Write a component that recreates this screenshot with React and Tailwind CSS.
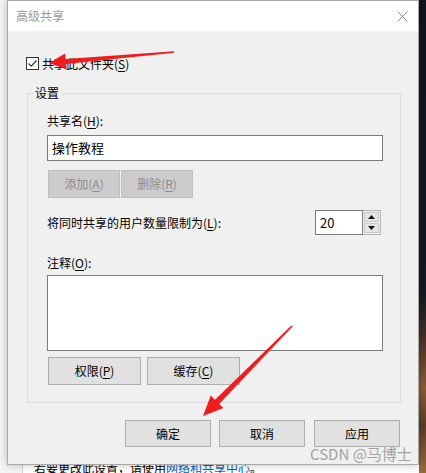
const ui = "font-['Noto_Sans_CJK_SC','Noto_Sans',sans-serif] text-[12px] text-black";

function Key({ children }) {
  return <u className="underline underline-offset-2 decoration-1">{children}</u>;
}

function Button({ children, className = '', disabled = false }) {
  return (
    <button
      disabled={disabled}
      className={
        'flex items-center justify-center border leading-none ' +
        (disabled
          ? 'bg-[#cccccc] border-[#bfbfbf] text-[#8d8d8d] '
          : 'bg-[#e1e1e1] border-[#adadad] text-black ') +
        className
      }
    >
      {children}
    </button>
  );
}

function Checkbox() {
  return (
    <span className="flex h-[13px] w-[13px] items-center justify-center border border-[#333333] bg-white">
      <svg width="11" height="11" viewBox="0 0 11 11" fill="none">
        <path d="M1.5 5.5 L4.2 8.2 L9.5 2.5" stroke="#333333" strokeWidth="1.2" />
      </svg>
    </span>
  );
}

function SpinBox({ value }) {
  return (
    <div className="mr-[2px] flex h-[25px]">
      <div className="flex w-[48px] items-center border border-[#7a7a7a] bg-white pl-[4px] text-[13px]">
        {value}
      </div>
      <div className="flex w-[18px] flex-col gap-[1px] border border-l-0 border-[#b5b5b5] bg-[#f0f0f0] p-[1px]">
        <span className="flex flex-1 items-center justify-center border border-[#c8c8c8] bg-[#e5e5e5]">
          <svg width="7" height="4" viewBox="0 0 7 4"><path d="M0 4 L3.5 0 L7 4 Z" fill="#111" /></svg>
        </span>
        <span className="flex flex-1 items-center justify-center border border-[#c8c8c8] bg-[#e5e5e5]">
          <svg width="7" height="4" viewBox="0 0 7 4"><path d="M0 0 L3.5 4 L7 0 Z" fill="#111" /></svg>
        </span>
      </div>
    </div>
  );
}

// red callout arrows drawn over the dialog
function Arrows() {
  return (
    <svg className="pointer-events-none absolute inset-0" width="426" height="473" viewBox="0 0 426 473">
      <polygon
        fill="#f21c1c"
        points="49,63 66.7,69.4 66.1,63.9 174,52.8 174,51.2 65.7,58.9 65.1,53.4"
      />
      <polygon
        fill="#f21c1c"
        points="203,416 223.5,408.1 219.2,403.9 292.6,326.6 291.4,325.4 215,399.7 210.7,395.5"
      />
    </svg>
  );
}

export default function App() {
  return (
    <div className={'relative h-[473px] w-[426px] overflow-hidden bg-[#f4f4f4] ' + ui}>
      {/* desktop wallpaper strip */}
      <div className="absolute right-0 top-0 h-full w-[8px] bg-[linear-gradient(to_bottom,#0d1620_0%,#111a24_62%,#4a3226_72%,#8a5c34_82%,#5b3c2a_90%,#9a6a3a_100%)]" />

      {/* explorer window behind the dialog */}
      <div className="absolute left-[22px] top-[440px] h-[40px] w-[397px] border-l border-[#cfcfcf] bg-white pl-[11px] pt-[20px] leading-[16px]">
        若要更改此设置，请使用<span className="text-[#0066cc] underline">网络和共享中心</span>。
      </div>

      {/* advanced sharing dialog */}
      <div className="absolute left-[7px] top-0 flex h-[465px] w-[412px] flex-col border border-[#a8a8a8] bg-[#f0f0f0] shadow-[0_0_8px_rgba(0,0,0,0.25)]">
        <div className="flex h-[30px] items-center justify-between bg-white pl-[8px] pr-[10px]">
          <span className="text-[#9a9a9a]">高级共享</span>
          <svg width="11" height="11" viewBox="0 0 11 11">
            <path d="M0.5 0.5 L10.5 10.5 M10.5 0.5 L0.5 10.5" stroke="#8a8a8a" strokeWidth="1" />
          </svg>
        </div>

        <div className="flex flex-1 flex-col pl-[19px] pr-[17px]">
          <label className="-ml-[1px] mt-[26px] flex h-[13px] items-center gap-[3px] leading-[13px]">
            <Checkbox />
            <span>共享此文件夹(<Key>S</Key>)</span>
          </label>

          <fieldset className="mt-[15px] border border-[#dcdcdc]">
            <legend className="ml-[5px] px-[2px] leading-[16px]">设置</legend>
            <div className="flex flex-col pb-[17px] pl-[19px] pr-[17px] pt-[12px]">
              <span className="leading-[16px]">共享名(<Key>H</Key>):</span>
              <div className="mt-[6px] flex h-[26px] items-center border border-[#7a7a7a] bg-white pl-[4px] text-[13px]">
                操作教程
              </div>
              <div className="ml-[1px] mt-[9px] flex gap-[1px]">
                <Button disabled className="h-[28px] w-[72px]">添加(<Key>A</Key>)</Button>
                <Button disabled className="h-[28px] w-[72px]">删除(<Key>R</Key>)</Button>
              </div>
              <div className="mt-[12px] flex h-[25px] items-center justify-between">
                <span className="leading-[16px]">将同时共享的用户数量限制为(<Key>L</Key>):</span>
                <SpinBox value="20" />
              </div>
              <span className="mt-[20px] leading-[16px]">注释(<Key>O</Key>):</span>
              <div className="mt-[4px] h-[76px] border border-[#7a7a7a] bg-white" />
              <div className="ml-[1px] mt-[6px] flex gap-[6px]">
                <Button className="h-[28px] w-[93px]">权限(<Key>P</Key>)</Button>
                <Button className="h-[28px] w-[93px]">缓存(<Key>C</Key>)</Button>
              </div>
            </div>
          </fieldset>

          <div className="mr-[1px] mt-[17px] flex justify-end gap-[8px]">
            <Button className="h-[27px] w-[86px]">确定</Button>
            <Button className="h-[27px] w-[86px]">取消</Button>
            <Button className="ml-[1px] h-[27px] w-[86px]">应用</Button>
          </div>
        </div>
      </div>

      <span className="absolute left-[310px] top-[445px] text-[15px] leading-[18px] text-[#a3a3a3]">
        CSDN @马博士
      </span>

      <Arrows />
    </div>
  );
}
